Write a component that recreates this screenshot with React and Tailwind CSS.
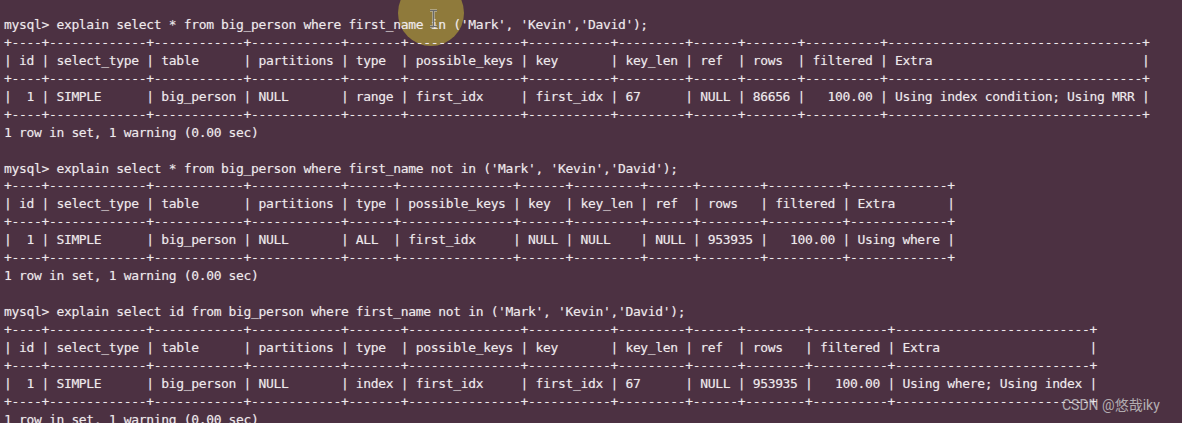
import React from 'react';

// builds mysql-style table output lines
const buildTable = (cols, row, right) => {
  const widths = cols.map((c, i) => Math.max(c.length, row[i].length));
  const border = '+' + widths.map(w => '-'.repeat(w + 2)).join('+') + '+';
  const header = '| ' + cols.map((c, i) => c.padEnd(widths[i])).join(' | ') + ' |';
  const data = '| ' + row.map((v, i) => (right.includes(i) ? v.padStart(widths[i]) : v.padEnd(widths[i]))).join(' | ') + ' |';
  return [border, header, border, data, border];
};

const cols = ['id', 'select_type', 'table', 'partitions', 'type', 'possible_keys', 'key', 'key_len', 'ref', 'rows', 'filtered', 'Extra'];
const right = [0, 9, 10];

const blocks = [
  {
    query: "explain select * from big_person where first_name in ('Mark', 'Kevin','David');",
    row: ['1', 'SIMPLE', 'big_person', 'NULL', 'range', 'first_idx', 'first_idx', '67', 'NULL', '86656', '100.00', 'Using index condition; Using MRR'],
  },
  {
    query: "explain select * from big_person where first_name not in ('Mark', 'Kevin','David');",
    row: ['1', 'SIMPLE', 'big_person', 'NULL', 'ALL', 'first_idx', 'NULL', 'NULL', 'NULL', '953935', '100.00', 'Using where'],
  },
  {
    query: "explain select id from big_person where first_name not in ('Mark', 'Kevin','David');",
    row: ['1', 'SIMPLE', 'big_person', 'NULL', 'index', 'first_idx', 'first_idx', '67', 'NULL', '953935', '100.00', 'Using where; Using index'],
  },
];

const lines = [];
blocks.forEach((b, idx) => {
  lines.push('mysql> ' + b.query);
  buildTable(cols, b.row, right).forEach(l => lines.push(l));
  lines.push('1 row in set, 1 warning (0.00 sec)');
  if (idx < blocks.length - 1) lines.push('');
});

export default function App() {
  return (
    <div className="relative w-[1182px] h-[423px] overflow-hidden bg-[#4c3142]">
      {/* mouse highlight, behind the text */}
      <div className="absolute left-[398px] top-[-20px] w-[66px] h-[66px] rounded-full bg-[#a08d3a]/80" />

      <pre
        className="relative pt-[16px] pl-[4px] m-0 text-[13px] leading-[17.95px] tracking-[-0.34px] text-[#eee9ec] whitespace-pre [text-shadow:0_0_1px_rgba(255,255,255,0.35)]"
        style={{ fontFamily: '"DejaVu Sans Mono", "Liberation Mono", monospace' }}
      >
        {lines.map((l, i) => (
          <div key={i} className="h-[17.95px]">{l}</div>
        ))}
      </pre>

      <div className="absolute left-[429px] top-[9px] w-[9px] h-[19px]">
        <svg width="9" height="19" viewBox="0 0 9 19">
          <path d="M1 1.5h7M4.5 1.5v16M1 17.5h7" stroke="#d8d8d8" strokeWidth="2.6" fill="none" opacity="0.6" />
          <path d="M1 1.5h7M4.5 1.5v16M1 17.5h7" stroke="#6a6a6a" strokeWidth="1.2" fill="none" />
        </svg>
      </div>

      <div
        className="absolute left-[1062px] top-[396px] text-[14px] leading-[18px] text-[#cfcfcf]/80"
        style={{ fontFamily: 'Roboto, "Noto Sans CJK SC", sans-serif' }}
      >
        CSDN @悠哉iky
      </div>
    </div>
  );
}
